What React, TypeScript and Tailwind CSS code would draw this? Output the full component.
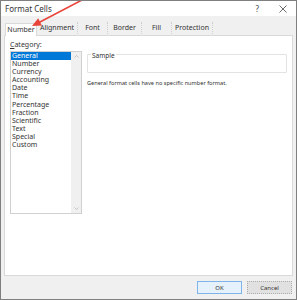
import React from 'react';

const tabs = [
  { label: 'Number', w: 'w-[32px]' },
  { label: 'Alignment', w: 'w-[41px]' },
  { label: 'Font', w: 'w-[30px]' },
  { label: 'Border', w: 'w-[34px]' },
  { label: 'Fill', w: 'w-[30px]' },
  { label: 'Protection', w: 'w-[41px]' },
];

const categories = [
  'General', 'Number', 'Currency', 'Accounting', 'Date', 'Time', 'Percentage',
  'Fraction', 'Scientific', 'Text', 'Special', 'Custom',
];

const App: React.FC = () => {
  return (
    <div className="relative w-[297px] h-[300px] bg-[#f0f0f0] border border-[#7f7f7f] flex flex-col font-['Segoe_UI','Noto_Sans',sans-serif] text-[#333] overflow-hidden">
      {/* title bar */}
      <div className="h-[15px] bg-white flex items-center pl-[4px] pr-[9px] shrink-0">
        <span className="text-[8px] leading-none">Format Cells</span>
        <span className="ml-auto text-[8px] leading-none text-[#444]">?</span>
        <svg className="ml-[20px]" width="8" height="8" viewBox="0 0 8 8">
          <path d="M0.5 0.5 L7.5 7.5 M7.5 0.5 L0.5 7.5" stroke="#444" strokeWidth="0.8" />
        </svg>
      </div>

      {/* tabs */}
      <div className="h-[19px] flex items-end pl-[4px] shrink-0">
        {tabs.map((t, i) =>
          i === 0 ? (
            <div
              key={t.label}
              className={`${t.w} h-[13px] -mb-px bg-white border border-b-0 border-[#d9d9d9] flex items-center justify-center text-[7px] relative z-10`}
            >
              {t.label}
            </div>
          ) : (
            <div
              key={t.label}
              className={`${t.w} h-[12px] mb-[1px] border-r border-dotted border-[#cfcfcf] flex items-center justify-center text-[7px]`}
            >
              {t.label}
            </div>
          )
        )}
      </div>

      {/* panel */}
      <div className="flex-1 mx-[3px] bg-white border border-[#d9d9d9] flex flex-col px-[5px] pt-[4px]">
        <div className="text-[7px] leading-[10px] mb-[1px]">
          <span className="underline">C</span>ategory:
        </div>
        <div className="flex gap-[5px]">
          <div className="w-[72px] h-[163px] border border-[#d0d0d0] flex">
            <div className="flex-1 flex flex-col">
              {categories.map((c, i) => (
                <div
                  key={c}
                  className={`h-[8.1px] leading-[8.1px] text-[7px] pl-[1px] ${i === 0 ? 'bg-[#0078d7] text-white' : ''}`}
                >
                  {c}
                </div>
              ))}
            </div>
            <div className="w-[10px] bg-[#f0f0f0] flex flex-col items-center justify-between py-[3px]">
              <svg width="5" height="3" viewBox="0 0 5 3">
                <path d="M0.5 2.5 L2.5 0.5 L4.5 2.5" fill="none" stroke="#b0b0b0" strokeWidth="0.7" />
              </svg>
              <svg width="5" height="3" viewBox="0 0 5 3">
                <path d="M0.5 0.5 L2.5 2.5 L4.5 0.5" fill="none" stroke="#b0b0b0" strokeWidth="0.7" />
              </svg>
            </div>
          </div>
          <div className="flex-1 flex flex-col pt-[3px]">
            <div className="relative h-[19px] border border-[#e3e3e3] rounded-[1px]">
              <span className="absolute -top-[3px] left-[3px] bg-white px-[1px] text-[6.5px] leading-[8px]">Sample</span>
            </div>
            <div className="mt-[6px] text-[5.6px] leading-[8px]">
              General format cells have no specific number format.
            </div>
          </div>
        </div>
      </div>

      {/* footer */}
      <div className="h-[23px] flex items-center justify-end gap-[5px] pr-[4px] shrink-0">
        <button className="w-[45px] h-[13px] bg-[#e5f1fb] border border-[#7eb4ea] text-[6px] leading-none">
          OK
        </button>
        <button className="w-[45px] h-[13px] bg-[#e1e1e1] border border-dotted border-[#adadad] text-[6px] leading-none">
          Cancel
        </button>
      </div>

      {/* annotation arrow */}
      <svg className="absolute top-0 left-0 z-20" width="297" height="30" viewBox="0 0 297 30">
        <line x1="81" y1="-1" x2="38" y2="21.5" stroke="#e8443a" strokeWidth="1.6" />
        <polygon points="31,25 40.8,24.5 37.2,17.3" fill="#e8443a" />
      </svg>
    </div>
  );
};

export default App;
